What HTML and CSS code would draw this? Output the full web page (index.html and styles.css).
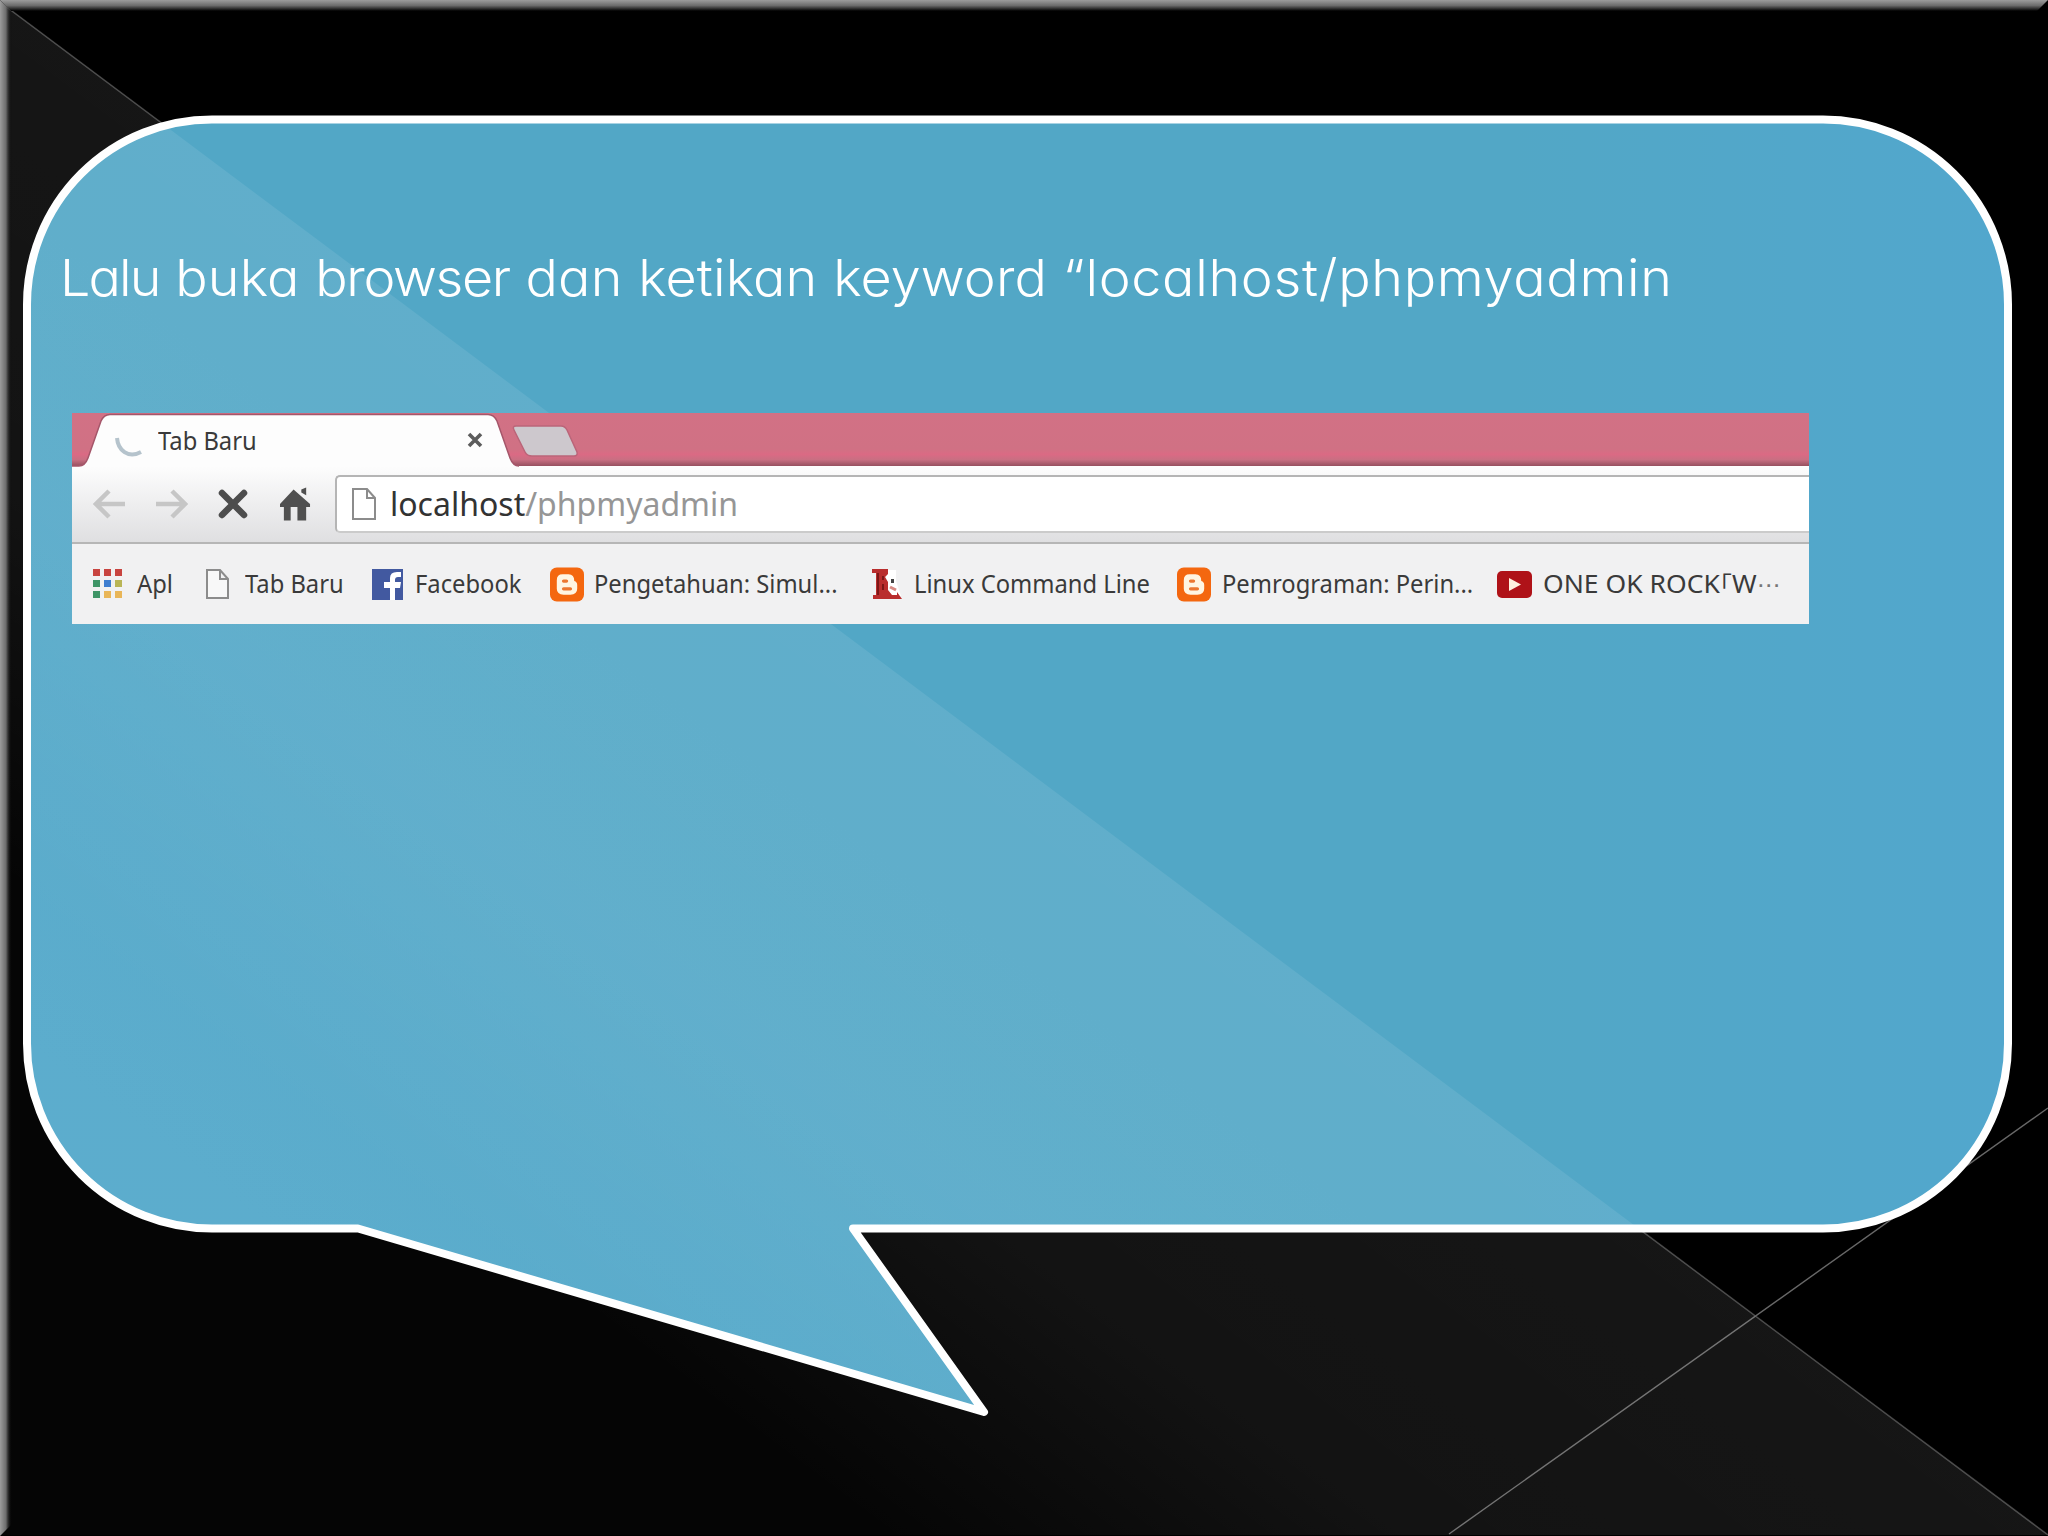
FILE: index.html
```
<!DOCTYPE html>
<html lang="id">
<head>
  <meta charset="UTF-8">
  <title>Localhost phpMyAdmin</title>
  <link rel="stylesheet" href="styles.css">
</head>
<body>
  <div class="slide">
    <svg class="backdrop" viewBox="0 0 2048 1536">
      <defs>
        <linearGradient id="shade" gradientUnits="userSpaceOnUse" x1="1024" y1="768" x2="606" y2="1327">
          <stop offset="0" stop-color="#fff" stop-opacity=".085"/>
          <stop offset=".55" stop-color="#fff" stop-opacity=".075"/>
          <stop offset="1" stop-color="#fff" stop-opacity=".02"/>
        </linearGradient>
        <linearGradient id="bubble-fill" gradientUnits="userSpaceOnUse" x1="300" y1="1250" x2="700" y2="716">
          <stop offset="0" stop-color="#59abcc"/>
          <stop offset="1" stop-color="#52a7c6"/>
        </linearGradient>
        <linearGradient id="bubble-edge" x1="0" y1="0" x2="1" y2="0">
          <stop offset=".75" stop-color="#52a7cd" stop-opacity="0"/>
          <stop offset="1" stop-color="#52a7cd"/>
        </linearGradient>
        <linearGradient id="bevel-top" x1="0" y1="0" x2="0" y2="1">
          <stop offset="0" stop-color="#9c9c9c"/>
          <stop offset=".5" stop-color="#6c6c6c"/>
          <stop offset="1" stop-color="#000"/>
        </linearGradient>
        <linearGradient id="bevel-left" x1="0" y1="0" x2="1" y2="0">
          <stop offset="0" stop-color="#9c9c9c"/>
          <stop offset=".5" stop-color="#6c6c6c"/>
          <stop offset="1" stop-color="#000" stop-opacity="0"/>
        </linearGradient>
        <path id="bubble" d="M212 119.5H1823A185 185 0 0 1 2008 304.500V1043.500A185 185 0 0 1 1823 1228.500H853L984 1412L358 1228.500H212A185 185 0 0 1 27 1043.500V304.500A185 185 0 0 1 212 119.500Z"/>
      </defs>
      <path d="M0 2L2048 1535" stroke="#444" stroke-width="1.5"/>
      <path d="M1449 1534L2048 1108" stroke="#686868" stroke-width="1.4"/>
      <!-- speech bubble -->
      <use href="#bubble" fill="url(#bubble-fill)"/>
      <use href="#bubble" fill="url(#bubble-edge)" stroke="#fff" stroke-width="8" stroke-linejoin="round"/>
      <path d="M0 2L2048 1535H0Z" fill="url(#shade)"/>
      <path d="M0 0H2048L2037 11H11Z" fill="url(#bevel-top)"/>
      <path d="M0 0L12 12V1524L0 1536Z" fill="url(#bevel-left)"/>
    </svg>

    <div class="content">
      <h1><span class="tight">Lalu</span> buka <span class="snug">browser</span> dan ketikan keyword <span class="loose">“localhost/phpmyadmin</span></h1>

      <div class="browser">
        <div class="tabs">
          <svg class="tab-shape" viewBox="0 0 1738 54">
            <defs>
              <linearGradient id="strip" x1="0" y1="0" x2="0" y2="1">
                <stop offset="0" stop-color="#d27185"/>
                <stop offset=".68" stop-color="#d07184"/>
                <stop offset=".78" stop-color="#db6a84"/>
                <stop offset=".88" stop-color="#c96f82"/>
                <stop offset="1" stop-color="#96505f"/>
              </linearGradient>
            </defs>
            <rect width="1738" height="53" fill="url(#strip)"/>
            <path d="M0 54V53H7Q13 53 16 45L29 8Q32 1.500 38 1.500H416Q422 1.500 425 8L438 45Q441 53 447 53H1738V54Z" fill="#fdfdfd"/>
            <path d="M0 53H7Q13 53 16 45L29 8Q32 1.500 38 1.500H416Q422 1.500 425 8L438 45Q441 53 447 53" fill="none" stroke="#a5566a" stroke-width="1.500"/>
            <path d="M444 13H489Q493 13 495 17L505 39Q506 43 502 43H460Q455 43 453 39L442 17Q440 13 444 13Z" fill="#cdc8cd" stroke="#bb6579" stroke-width="1.500"/>
          </svg>
          <svg class="spinner" viewBox="0 0 28 22"><path d="M2 1C3 13 13 22 26 15" fill="none" stroke="#b5c3cc" stroke-width="4"/></svg>
          <span class="label tab-title">Tab Baru</span>
          <svg class="close" viewBox="0 0 16 16"><path d="M2 2L14 14M14 2L2 14" stroke="#5c5c5c" stroke-width="3.600"/></svg>
        </div>

        <div class="toolbar">
          <svg class="arrow" viewBox="0 0 33 30"><path d="M32 15H3M16 2L3 15L16 28" fill="none" stroke="#c6c6c6" stroke-width="4.500"/></svg>
          <svg class="arrow forward" viewBox="0 0 33 30"><path d="M1 15H30M17 2L30 15L17 28" fill="none" stroke="#c6c6c6" stroke-width="4.500"/></svg>
          <svg class="stop" viewBox="0 0 30 30"><path d="M4 4L26 26M26 4L4 26" stroke="#4d4d4d" stroke-width="6.500" stroke-linecap="round"/></svg>
          <svg class="home" viewBox="0 0 32 34"><path d="M14 2L0 17V20H4V34H11V20H18V34H27V20H31V17Z" fill="#505050"/><path d="M22 2L27 0V8L22 5Z" fill="#505050"/></svg>
          <div class="address">
            <svg class="page" viewBox="0 0 26 34"><path d="M2 2H16L24 11V32H2ZM16 2V11H24" fill="#fff" stroke="#8c8c8c" stroke-width="2"/></svg>
            <span class="url">localhost<span class="path">/phpmyadmin</span></span>
          </div>
        </div>

        <div class="bookmarks">
          <div class="bookmark apps">
            <svg class="icon" viewBox="0 0 30 30">
              <path d="M0 0h7v7H0zM11 0h7v7h-7zM22 0h7v7h-7z" fill="#c84440"/>
              <path d="M0 11h7v7H0zM0 22h7v7H0z" fill="#3f9567"/>
              <path d="M11 11h7v7h-7z" fill="#3f7ed0"/>
              <path d="M22 11h7v7h-7z" fill="#b9b556"/>
              <path d="M11 22h7v7h-7zM22 22h7v7h-7z" fill="#e9b658"/>
            </svg>
            <span class="label">Apl</span>
          </div>
          <div class="bookmark tab-baru">
            <svg class="icon" viewBox="0 0 26 32"><path d="M2 2H15L23 11V30H2ZM15 2V11H23" fill="#f8f8f8" stroke="#8c8c8c" stroke-width="2"/></svg>
            <span class="label">Tab Baru</span>
          </div>
          <div class="bookmark facebook">
            <svg class="icon" viewBox="0 0 31 31"><rect width="31" height="31" fill="#4259a0"/><path d="M18 31V19H12V13H18V9Q18 3 25 3H29V8H26Q23 8 23 11V13H29L28 19H23V31Z" fill="#fff"/></svg>
            <span class="label">Facebook</span>
          </div>
          <div class="bookmark pengetahuan">
            <svg class="icon" viewBox="0 0 35 35"><rect width="35" height="35" rx="7" fill="#f4670f"/><path d="M13 7H19Q25 7 25 14Q28 15 28 18V22Q28 28 21 28H14Q7 28 7 22V13Q7 7 13 7Z" fill="#fff5e2"/><path d="M14 14H17M14 22H21" stroke="#ec7730" stroke-width="3.500" stroke-linecap="round"/></svg>
            <span class="label">Pengetahuan: Simul...</span>
          </div>
          <div class="bookmark linux">
            <svg class="icon" viewBox="0 0 31 31"><path d="M14 1H24V12L29 27H15Z" fill="#fff"/><path d="M0 0H16V5L13 8L16 13V21L20 26H25V23L30 30H1V26H4V4H0Z" fill="#b92d2d"/><path d="M6 4V26M11 7V11M11 15V21" stroke="#7d1717" stroke-width="2"/><path d="M19 10H22V14H19Z" fill="#444"/><path d="M18 18L24 21" stroke="#d78882" stroke-width="3"/></svg>
            <span class="label">Linux Command Line</span>
          </div>
          <div class="bookmark pemrograman">
            <svg class="icon" viewBox="0 0 35 35"><rect width="35" height="35" rx="7" fill="#f4670f"/><path d="M13 7H19Q25 7 25 14Q28 15 28 18V22Q28 28 21 28H14Q7 28 7 22V13Q7 7 13 7Z" fill="#fff5e2"/><path d="M14 14H17M14 22H21" stroke="#ec7730" stroke-width="3.500" stroke-linecap="round"/></svg>
            <span class="label">Pemrograman: Perin...</span>
          </div>
          <div class="bookmark youtube">
            <svg class="icon" viewBox="0 0 35 27"><rect width="35" height="27" rx="5" fill="#af1218"/><path d="M12 7L24 13.500L12 20Z" fill="#fff0de"/></svg>
            <span class="label">ONE OK ROCK<span class="quote">｢</span>W<span class="dots">⋯</span></span>
          </div>
        </div>
      </div>
    </div>
  </div>
</body>
</html>
```
FILE: styles.css
```
* {
  box-sizing: border-box;
}

body {
  margin: 0;
  background-color: #000;
}

svg {
  display: block;
  flex: none;
}

.slide {
  position: relative;
  width: 2048px;
  height: 1536px;
  overflow: hidden;
  background-color: #000;
}

.backdrop {
  position: absolute;
  top: 0;
  left: 0;
  width: 100%;
  height: 100%;
}

.content {
  position: relative;
  padding: 243px 0 0 72px;
}

h1 {
  margin: 0 0 100px -12px;
  height: 70px;
  line-height: 70px;
  font-family: Inter, sans-serif;
  font-size: 51px;
  font-weight: 300;
  font-feature-settings: "cv11", "calt" 0;
  letter-spacing: 0.1px;
  word-spacing: 0.5px;
  white-space: nowrap;
  color: #fff;
  transform: scaleX(1.056);
  transform-origin: left;
}

.tight {
  letter-spacing: -1.8px;
}

.snug {
  letter-spacing: -1.3px;
}

.loose {
  letter-spacing: 0.65px;
}

.browser {
  width: 1737px;
  height: 211px;
  overflow: hidden;
  background-color: #f1f1f2;
  font-family: "Noto Sans", "Open Sans", "Noto Sans CJK JP", sans-serif;
  color: #3a3a3a;
}

.tabs {
  position: relative;
  display: flex;
  height: 53px;
}

.tab-shape {
  position: absolute;
  top: 0;
  left: 0;
  width: 1738px;
  height: 54px;
}

.spinner {
  position: relative;
  width: 28px;
  height: 22px;
  margin: 24px 15px 0 43px;
}

.label {
  font-size: 25px;
  line-height: 34px;
  white-space: nowrap;
  transform: scaleX(0.95);
  transform-origin: left;
}

.tab-title {
  width: 309px;
  margin-top: 10px;
}

.close {
  position: relative;
  width: 16px;
  height: 16px;
  margin-top: 19px;
}

.toolbar {
  display: flex;
  align-items: center;
  height: 76px;
  padding: 0 0 0 21px;
  background: linear-gradient(#fdfdfd, #dfdfe1);
}

.arrow {
  width: 33px;
  height: 30px;
  margin-right: 29px;
}

.forward {
  margin-right: 30px;
}

.stop {
  width: 30px;
  height: 30px;
  margin-right: 32px;
}

.home {
  width: 31px;
  height: 34px;
  margin-right: 24px;
}

.address {
  display: flex;
  flex: 1;
  align-items: center;
  height: 58px;
  padding-left: 14px;
  background-color: #fff;
  border: 2px solid #b5b5b5;
  border-bottom-color: #cbcbcb;
  border-right: none;
  border-radius: 5px 0 0 5px;
}

.page {
  width: 26px;
  height: 34px;
  margin-right: 13px;
}

.url {
  font-size: 32px;
  line-height: 44px;
  color: #333;
}

.path {
  color: #969696;
}

.bookmarks {
  display: flex;
  align-items: center;
  height: 82px;
  padding-left: 21px;
  border-top: 2px solid #b6b6b6;
}

.bookmark {
  display: flex;
  align-items: center;
  flex: none;
}

.bookmark .label {
  padding-bottom: 2px;
}

.apps { width: 112px; }
.apps .icon { width: 30px; height: 30px; margin-right: 14px; }

.tab-baru { width: 167px; }
.tab-baru .icon { width: 26px; height: 32px; margin-right: 14px; }

.facebook { width: 178px; }
.facebook .icon { width: 31px; height: 31px; margin-right: 12px; }

.pengetahuan { width: 322px; }
.pengetahuan .icon { width: 34px; height: 35px; margin-right: 10px; }

.linux { width: 305px; }
.linux .icon { width: 31px; height: 31px; margin-right: 11px; }

.pemrograman { width: 320px; }
.pemrograman .icon { width: 34px; height: 35px; margin-right: 11px; }

.youtube { width: 300px; }
.youtube .icon { width: 35px; height: 27px; margin-right: 11px; }

.youtube .label {
  transform: scaleX(1.06);
}

.quote {
  font-family: "Noto Sans CJK JP", sans-serif;
  font-size: 23px;
  line-height: 1;
}

.dots {
  font-family: "DejaVu Sans", sans-serif;
  font-size: 23px;
  line-height: 1;
  color: #777;
}
```
